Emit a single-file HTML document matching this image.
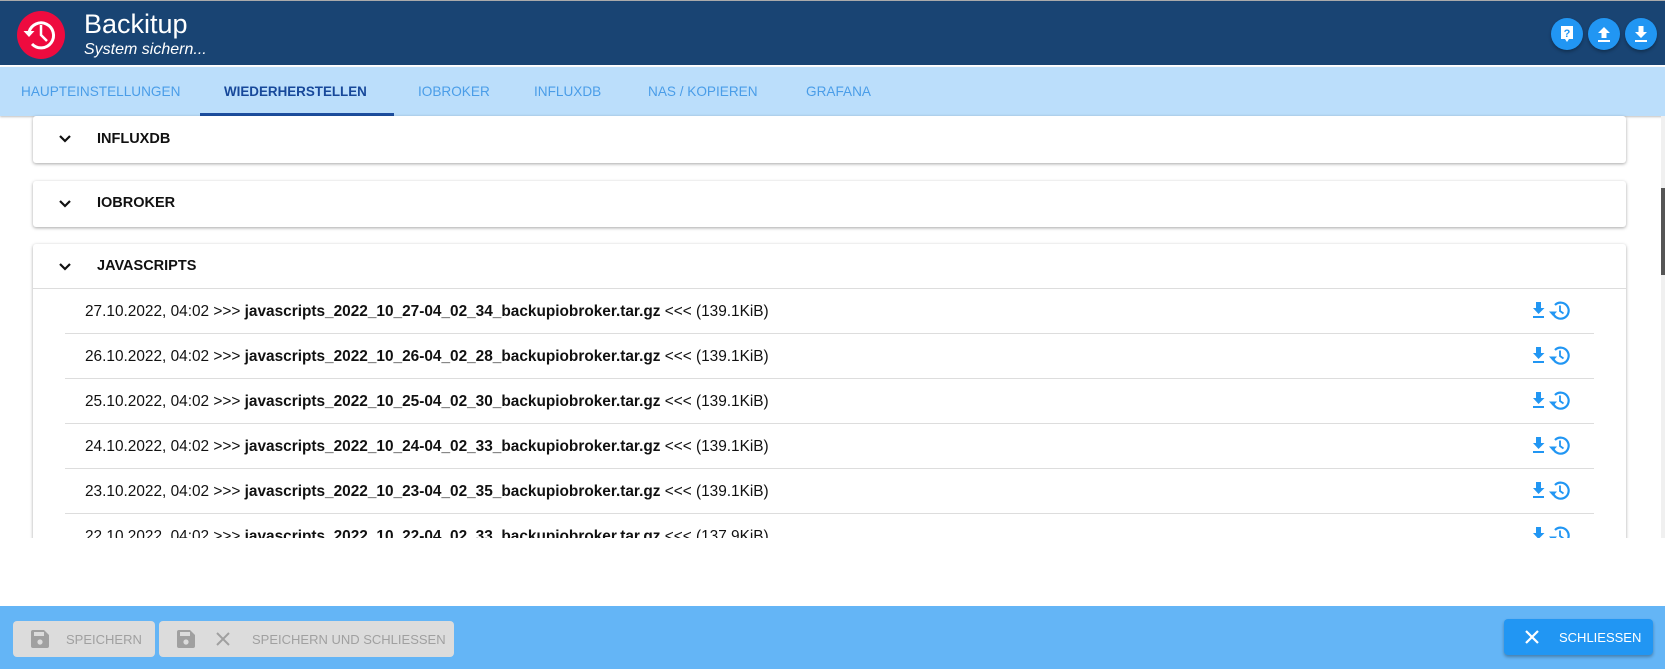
<!DOCTYPE html>
<html><head><meta charset="utf-8"><style>
*{box-sizing:border-box;margin:0;padding:0}
body{width:1665px;height:669px;overflow:hidden;background:#fff;font-family:"Liberation Sans",sans-serif;position:relative}
.hdr{position:absolute;left:0;top:0;width:1665px;height:65px;background:#194473;border-top:1px solid #aaa}
.logo{position:absolute;left:17px;top:10px;width:48px;height:48px;border-radius:50%;background:#ee0b3f}
.title{position:absolute;left:84px;top:8px;color:#fff;font-size:27px}
.sub{position:absolute;left:84px;top:40px;color:#fff;font-size:16px;font-style:italic}
.hb{position:absolute;top:17px;width:32px;height:32px;border-radius:50%;background:#2196f3;box-shadow:0 2px 3px rgba(0,0,0,.3)}
.hb svg{position:absolute;left:6px;top:6px}
.tabs{position:absolute;left:0;top:67px;width:1665px;height:49px;background:#bbdefb;box-shadow:0 1px 2px rgba(0,0,0,.25)}
.tab{position:absolute;top:17px;font-size:13.6px;color:#4a9de8;white-space:nowrap}
.tab.a{color:#17489a;font-weight:bold;font-size:13.4px}
.ind{position:absolute;left:200px;top:46px;width:194px;height:3px;background:#1d4fa0}
.card{position:absolute;left:33px;width:1593px;background:#fff;box-shadow:0 1px 3px rgba(0,0,0,.35);border-radius:3px}
.ch{position:absolute;left:26px;font-size:14.5px;font-weight:bold;color:#111}
.chev{position:absolute;left:25px}
.row{position:absolute;left:32px;width:1529px;height:45px;border-bottom:1px solid #ddd}
.rt{position:absolute;left:20px;top:14px;font-size:15.4px;color:#111;white-space:nowrap}
.rt b{font-weight:bold}
.foot{position:absolute;left:0;top:606px;width:1665px;height:63px;background:#64b5f6}
.fb{position:absolute;top:15px;height:36px;background:#dcdcdc;border-radius:4px;color:#a0a0a0;font-size:13px;white-space:nowrap}
.fb span{position:absolute;top:11px}
.close{position:absolute;left:1504px;top:13px;width:149px;height:36px;background:#2196f3;border-radius:4px;box-shadow:0 2px 3px rgba(0,0,0,.3);color:#fff;font-size:13px;white-space:nowrap}
.sb{position:absolute;left:1661px;top:116px;width:4px;height:422px;background:#f0f0f0}
.sbt{position:absolute;left:1661px;top:188px;width:4px;height:87px;background:#555}
</style></head><body>
<div class="hdr">
<div class="logo"><svg width="48" height="48" viewBox="0 0 48 48"><path d="M12 21 A12.5 12.5 0 1 1 15 33" fill="none" stroke="#fff" stroke-width="3"/><path d="M6.5 20 L17.5 20 L12 26 Z" fill="#fff"/><path d="M24 14 V24 L30 30" fill="none" stroke="#fff" stroke-width="2.5"/></svg></div>
<div class="title">Backitup</div>
<div class="sub">System sichern...</div>
<div class="hb" style="left:1551px"><svg width="20" height="20" viewBox="0 0 20 20"><path d="M4 2h12v13h-4l-2 3-2-3H4z" fill="#fff"/><text x="10" y="13" font-size="11" font-weight="bold" fill="#2196f3" text-anchor="middle" font-family="Liberation Sans">?</text></svg></div>
<div class="hb" style="left:1588px"><svg width="20" height="20" viewBox="0 0 20 20"><path d="M10 3l6 6h-3.5v5h-5V9H4z M4 16h12v2H4z" fill="#fff"/></svg></div>
<div class="hb" style="left:1625px"><svg width="20" height="20" viewBox="0 0 20 20"><path d="M7.5 2h5v6H16l-6 6-6-6h3.5z M4 16h12v2H4z" fill="#fff"/></svg></div>
</div>
<div class="tabs">
<div class="tab" style="left:21px">HAUPTEINSTELLUNGEN</div>
<div class="tab a" style="left:224px">WIEDERHERSTELLEN</div>
<div class="tab" style="left:418px">IOBROKER</div>
<div class="tab" style="left:534px">INFLUXDB</div>
<div class="tab" style="left:648px">NAS / KOPIEREN</div>
<div class="tab" style="left:806px">GRAFANA</div>
<div class="ind"></div>
</div>
<div class="card" style="top:116px;height:47px"><svg class="chev" style="top:17px" width="14" height="12" viewBox="0 0 14 12"><path d="M2 3l5 5 5-5" fill="none" stroke="#111" stroke-width="2.2"/></svg><div class="ch" style="left:64px;top:15px">INFLUXDB</div></div>
<div class="card" style="top:181px;height:46px"><svg class="chev" style="top:17px" width="14" height="12" viewBox="0 0 14 12"><path d="M2 3l5 5 5-5" fill="none" stroke="#111" stroke-width="2.2"/></svg><div class="ch" style="left:64px;top:14px">IOBROKER</div></div>
<div class="card" style="top:244px;height:330px;border-radius:3px 3px 0 0">
<svg class="chev" style="top:17px" width="14" height="12" viewBox="0 0 14 12"><path d="M2 3l5 5 5-5" fill="none" stroke="#111" stroke-width="2.2"/></svg><div class="ch" style="left:64px;top:14px">JAVASCRIPTS</div>
<div style="position:absolute;left:0;top:44px;width:1593px;border-top:1px solid #ddd"></div>
</div>
<div style="position:absolute;left:33px;top:289px;width:1593px;height:249px;overflow:hidden">
<div class="row" style="top:0"><div class="rt">27.10.2022, 04:02 &gt;&gt;&gt; <b>javascripts_2022_10_27-04_02_34_backupiobroker.tar.gz</b> &lt;&lt;&lt; (139.1KiB)</div></div>
<div class="row" style="top:45px"><div class="rt">26.10.2022, 04:02 &gt;&gt;&gt; <b>javascripts_2022_10_26-04_02_28_backupiobroker.tar.gz</b> &lt;&lt;&lt; (139.1KiB)</div></div>
<div class="row" style="top:90px"><div class="rt">25.10.2022, 04:02 &gt;&gt;&gt; <b>javascripts_2022_10_25-04_02_30_backupiobroker.tar.gz</b> &lt;&lt;&lt; (139.1KiB)</div></div>
<div class="row" style="top:135px"><div class="rt">24.10.2022, 04:02 &gt;&gt;&gt; <b>javascripts_2022_10_24-04_02_33_backupiobroker.tar.gz</b> &lt;&lt;&lt; (139.1KiB)</div></div>
<div class="row" style="top:180px"><div class="rt">23.10.2022, 04:02 &gt;&gt;&gt; <b>javascripts_2022_10_23-04_02_35_backupiobroker.tar.gz</b> &lt;&lt;&lt; (139.1KiB)</div></div>
<div class="row" style="top:225px"><div class="rt">22.10.2022, 04:02 &gt;&gt;&gt; <b>javascripts_2022_10_22-04_02_33_backupiobroker.tar.gz</b> &lt;&lt;&lt; (137.9KiB)</div></div>
</div>
<svg style="position:absolute;left:0;top:0" width="1665" height="538">
<defs><g id="ic"><path d="M3 0h5v6h3.5L5.5 12 0 6h3z M0 14h11v2H0z" fill="#2196f3" transform="translate(0,1)"/><g transform="translate(15,0)"><path d="M5 12 A8 8 0 1 0 7 4" fill="none" stroke="#2196f3" stroke-width="2.2"/><path d="M1 10.5h8l-4 4.5z" fill="#2196f3"/><path d="M12 4.5V10l3.5 2.5" fill="none" stroke="#2196f3" stroke-width="1.8"/></g></g></defs>
<use href="#ic" x="1533" y="301"/><use href="#ic" x="1533" y="346"/><use href="#ic" x="1533" y="391"/><use href="#ic" x="1533" y="436"/><use href="#ic" x="1533" y="481"/><use href="#ic" x="1533" y="526"/>
</svg>
<div style="position:absolute;left:0;top:538px;width:1665px;height:68px;background:#fff"></div>
<div class="sb"></div><div class="sbt"></div>
<div class="foot">
<div class="fb" style="left:13px;width:142px"><svg style="position:absolute;left:18px;top:9px" width="18" height="18" viewBox="0 0 18 18"><path d="M0 2a2 2 0 0 1 2-2h11l5 5v11a2 2 0 0 1-2 2H2a2 2 0 0 1-2-2z" fill="#a0a0a0"/><rect x="3" y="2" width="10" height="4" fill="#dcdcdc"/><circle cx="9" cy="12" r="2.6" fill="#dcdcdc"/></svg><span style="left:53px">SPEICHERN</span></div>
<div class="fb" style="left:159px;width:295px"><svg style="position:absolute;left:18px;top:9px" width="18" height="18" viewBox="0 0 18 18"><path d="M0 2a2 2 0 0 1 2-2h11l5 5v11a2 2 0 0 1-2 2H2a2 2 0 0 1-2-2z" fill="#a0a0a0"/><rect x="3" y="2" width="10" height="4" fill="#dcdcdc"/><circle cx="9" cy="12" r="2.6" fill="#dcdcdc"/></svg><svg style="position:absolute;left:57px;top:11px" width="14" height="14" viewBox="0 0 14 14"><path d="M1 1l12 12M13 1L1 13" stroke="#a0a0a0" stroke-width="2"/></svg><span style="left:93px">SPEICHERN UND SCHLIESSEN</span></div>
<div class="close"><svg style="position:absolute;left:21px;top:11px" width="14" height="14" viewBox="0 0 14 14"><path d="M1 1l12 12M13 1L1 13" stroke="#fff" stroke-width="2.2"/></svg><span style="position:absolute;left:55px;top:11px">SCHLIESSEN</span></div>
</div>
</body></html>
